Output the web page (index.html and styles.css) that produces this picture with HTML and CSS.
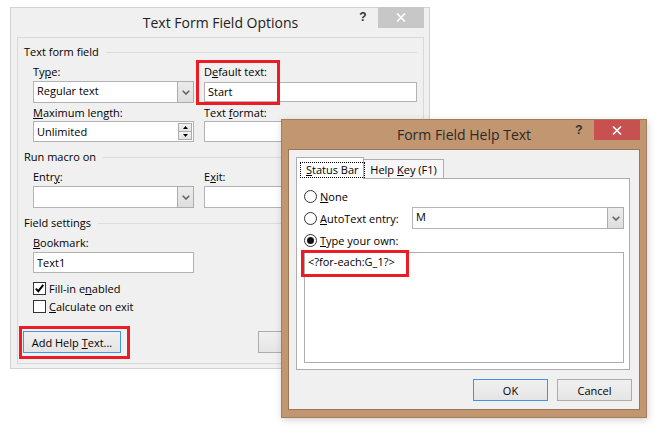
FILE: index.html
```html
<!DOCTYPE html>
<html lang="en">
<head>
<meta charset="utf-8">
<title>Text Form Field Options</title>
<link rel="stylesheet" href="styles.css">
</head>
<body>
<div class="desk">

  <section class="win win-a">
    <header class="titlebar">
      <h1 class="title">Text Form Field Options</h1>
      <div class="caption">
        <span class="cap-help">?</span>
        <span class="cap-close"><svg width="10" height="9" viewBox="0 0 10 9"><path d="M1 0.5L9 8.5M9 0.5L1 8.5" stroke="#fff" stroke-width="1.6" fill="none"/></svg></span>
      </div>
    </header>
    <div class="client">
      <div class="group-head"><span>Text form field</span></div>
      <div class="fields">
        <div class="lbl">Ty<u>p</u>e:</div>
        <div class="lbl">D<u>e</u>fault text:</div>
        <div class="combo"><span class="val">Regular text</span><span class="drop"><svg width="8" height="5" viewBox="0 0 8 5"><path d="M0.7 0.7L4 4L7.3 0.7" stroke="#5f5f5f" stroke-width="1.5" fill="none"/></svg></span></div>
        <div class="edit"><span class="val">Start</span></div>
        <div class="lbl lbl-2"><u>M</u>aximum length:</div>
        <div class="lbl lbl-2">Text <u>f</u>ormat:</div>
        <div class="edit spin"><span class="val">Unlimited</span><span class="spin-btns"><span class="sb"><svg width="5" height="3" viewBox="0 0 5 3"><path d="M0 3L2.5 0L5 3Z" fill="#000"/></svg></span><span class="sb"><svg width="5" height="3" viewBox="0 0 5 3"><path d="M0 0L2.5 3L5 0Z" fill="#000"/></svg></span></span></div>
        <div class="edit edit-21"></div>
      </div>

      <div class="group-head gh-next"><span>Run macro on</span></div>
      <div class="fields">
        <div class="lbl">Entr<u>y</u>:</div>
        <div class="lbl">E<u>x</u>it:</div>
        <div class="combo"><span class="val"></span><span class="drop"><svg width="8" height="5" viewBox="0 0 8 5"><path d="M0.7 0.7L4 4L7.3 0.7" stroke="#5f5f5f" stroke-width="1.5" fill="none"/></svg></span></div>
        <div class="combo"><span class="val"></span><span class="drop"><svg width="8" height="5" viewBox="0 0 8 5"><path d="M0.7 0.7L4 4L7.3 0.7" stroke="#5f5f5f" stroke-width="1.5" fill="none"/></svg></span></div>
      </div>

      <div class="group-head gh-next"><span>Field settings</span></div>
      <div class="fields">
        <div class="lbl"><u>B</u>ookmark:</div>
        <div class="lbl"></div>
        <div class="edit edit-21"><span class="val">Text1</span></div>
      </div>

      <label class="check check-1"><span class="box"><svg width="11" height="11" viewBox="0 0 11 11"><path d="M1.8 5.6L4.3 8.2L9.3 1.8" stroke="#000" stroke-width="1.9" fill="none"/></svg></span><span>Fill-in e<u>n</u>abled</span></label>
      <label class="check check-2"><span class="box"></span><span><u>C</u>alculate on exit</span></label>

      <div class="btnrow-a">
        <span class="btn btn-default btn-wide"><span>Add Help <u>T</u>ext...</span></span>
        <span class="btn-group">
          <span class="btn"><span>OK</span></span>
          <span class="btn"><span>Cancel</span></span>
        </span>
      </div>
    </div>
  </section>

  <section class="win win-b">
    <header class="titlebar">
      <h1 class="title">Form Field Help Text</h1>
      <div class="caption">
        <span class="cap-help">?</span>
        <span class="cap-close"><svg width="10" height="9" viewBox="0 0 10 9"><path d="M1 0.5L9 8.5M9 0.5L1 8.5" stroke="#fff" stroke-width="1.6" fill="none"/></svg></span>
      </div>
    </header>
    <div class="client">
      <div class="tabs">
        <span class="tab tab-on"><span class="focus"><u>S</u>tatus Bar</span></span>
        <span class="tab">Help <u>K</u>ey (F1)</span>
      </div>
      <div class="pane">
        <div class="radio-row"><span class="radio"></span><span><u>N</u>one</span></div>
        <div class="radio-row rr-2">
          <span class="rad-label"><span class="radio"></span><span><u>A</u>utoText entry:</span></span>
          <span class="combo combo-m"><span class="val">M</span><span class="drop"><svg width="8" height="5" viewBox="0 0 8 5"><path d="M0.7 0.7L4 4L7.3 0.7" stroke="#5f5f5f" stroke-width="1.5" fill="none"/></svg></span></span>
        </div>
        <div class="radio-row rr-3"><span class="radio radio-on"></span><span><u>T</u>ype your own:</span></div>
        <div class="textarea">&lt;?for-each:G_1?&gt;</div>
      </div>
      <div class="btnrow-b">
        <span class="btn btn-default"><span>OK</span></span>
        <span class="btn"><span>Cancel</span></span>
      </div>
    </div>
  </section>

  <div class="hl hl-1"></div>
  <div class="hl hl-2"></div>
  <div class="hl hl-3"></div>
</div>
</body>
</html>
```

FILE: styles.css
```css
* { box-sizing: border-box; }
html, body { margin: 0; padding: 0; background: #fff; }
body {
  font-family: "Segoe UI", "Open Sans", sans-serif;
  font-size: 11px;
  color: #000;
}
u { text-decoration: underline; text-underline-offset: 1px; }

.desk { position: relative; width: 663px; height: 447px; overflow: hidden; }

/* windows */
.win { position: absolute; display: flex; flex-direction: column; }
.win-a {
  left: 10px; top: 7px; width: 420px; height: 362px;
  border: 1px solid #d2d2d2; background: #f0f0f0;
  padding: 0 5px 4px 6px;
}
.win-b {
  left: 281px; top: 119px; width: 366px; height: 299px;
  border: 1px solid #a27d5c; background: #c29670;
  padding: 0 6px 7px 6px;
  box-shadow: 1px 2px 7px rgba(0, 0, 0, 0.18);
}

.titlebar { height: 29px; flex: none; display: grid; }
.title, .caption { grid-area: 1 / 1; }
.title {
  margin: 0; font-weight: 400; font-size: 14px;
  justify-self: center; align-self: center; color: #222;
}
.win-b .title { color: #2a2a2a; }
.caption { justify-self: end; align-self: start; display: flex; }
.win-a .caption { margin-top: -1px; }
.cap-help {
  width: 30px; height: 20px; display: flex; align-items: center; justify-content: center;
  font-weight: 700; font-size: 12px; color: #333; font-family: "Liberation Sans", sans-serif;
}
.cap-close { width: 46px; height: 20px; display: flex; align-items: center; justify-content: center; }
.win-a .cap-close { background: #c7c7c7; height: 21px; }
.win-b .cap-close { background: #c75050; }

.client { flex: 1; border: 1px solid #d9d9d9; background: #f0f0f0; }
.win-a .client { padding: 6px 6px 0 6px; }
.win-b .client { border-color: #9a7657; padding: 7px 7px 0 7px; display: flex; flex-direction: column; }

/* dialog A */
.group-head { display: flex; align-items: center; gap: 7px; height: 16px; line-height: 16px; }
.group-head::after { content: ""; flex: 1; height: 1px; background: #dcdcdc; }
.gh-next { margin-top: 7px; }

.fields {
  display: grid; grid-template-columns: 161px 213px; column-gap: 10px;
  margin: 4px 0 0 9px; align-items: center;
}
.lbl { height: 16px; line-height: 16px; margin-bottom: 1px; white-space: nowrap; }
.lbl-2 { margin-top: 2px; margin-bottom: 0; }

.combo, .edit {
  display: flex; align-items: stretch; background: #fff;
  border: 1px solid #b3b3b3; line-height: 18px;
}
.combo { height: 22px; }
.edit { height: 20px; padding-left: 3px; line-height: 18px; }
.edit-21 { height: 21px; line-height: 19px; }
.val { flex: 1; padding-left: 3px; white-space: nowrap; overflow: hidden; }
.edit .val { padding-left: 0; }
.drop {
  width: 17px; flex: none; display: flex; align-items: center; justify-content: center;
  border: 1px solid #acacac; margin: -1px -1px -1px 0;
  background: linear-gradient(#ececec, #dedede);
}
.spin { height: 21px; line-height: 19px; }
.spin-btns { width: 14px; display: flex; flex-direction: column; margin: 1px 1px 1px 0; }
.sb {
  flex: 1; display: flex; align-items: center; justify-content: center;
  border: 1px solid #acacac; background: linear-gradient(#f2f2f2, #e3e3e3);
}
.sb + .sb { border-top: 0; }

.check { display: flex; align-items: center; gap: 3px; height: 16px; margin-left: 9px; white-space: nowrap; }
.check-1 { margin-top: 7px; }
.check-2 { margin-top: 2px; }
.box {
  width: 13px; height: 13px; border: 1px solid #333; background: #fff;
  display: flex; align-items: center; justify-content: center;
}

.btnrow-a { display: flex; justify-content: space-between; margin: 17px 0 0 -1px; }
.btn-group { display: flex; gap: 9px; }
.btn {
  width: 75px; height: 22px; display: flex; align-items: center; justify-content: center;
  border: 1px solid #acacac; background: linear-gradient(#f0f0f0, #e5e5e5);
  white-space: nowrap;
}
.btn-wide { width: 98px; }
.btn-default { border-color: #3c95e6; }

/* dialog B */
.tabs { display: flex; align-items: flex-end; height: 21px; }
.tab {
  width: 80px; height: 19px; text-align: center; line-height: 17px; padding-top: 1px;
  border: 1px solid #adadad; border-left: 0; border-bottom: 0; background: #f7f7f7;
  white-space: nowrap;
}
.tab-on {
  width: 68px; height: 22px; margin-bottom: -1px; position: relative; z-index: 1;
  border-left: 1px solid #adadad; background: #fff; padding: 3px 0 0 3px; text-align: left;
}
.focus { display: inline-block; border: 1px dotted #000; padding: 0 5px; line-height: 14px; }

.pane {
  height: 192px; margin-right: 2px; border: 1px solid #adadad; background: #fff;
  padding: 9px 5px 6px 7px; display: flex; flex-direction: column;
}
.radio-row { display: flex; align-items: center; gap: 3px; height: 16px; white-space: nowrap; }
.rr-2 { height: 22px; margin-top: 3px; gap: 0; }
.rr-3 { margin-top: 3px; }
.rad-label { width: 108px; display: flex; align-items: center; gap: 3px; }
.combo-m { flex: 1; }
.radio {
  width: 13px; height: 13px; border: 1px solid #333; border-radius: 50%; background: #fff;
  display: flex; align-items: center; justify-content: center; flex: none;
}
.radio-on::after { content: ""; width: 7px; height: 7px; border-radius: 50%; background: #111; }
.textarea {
  height: 111px; margin-top: 4px; border: 1px solid #adadad; background: #fff;
  padding: 1px 3px; line-height: 16px; white-space: nowrap;
}

.btnrow-b { display: flex; justify-content: flex-end; gap: 9px; margin-top: 9px; }

/* red annotation boxes */
.hl { position: absolute; border: 3px solid #ed1c24; }
.hl-1 { left: 196px; top: 60px; width: 84px; height: 45px; }
.hl-2 { left: 19px; top: 326px; width: 111px; height: 33px; }
.hl-3 { left: 301px; top: 250px; width: 108px; height: 27px; }
```
